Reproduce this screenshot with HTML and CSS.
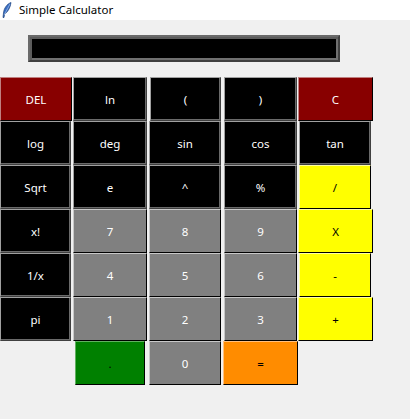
FILE: index.html
```html
<!DOCTYPE html>
<html>
<head>
<meta charset="utf-8">
<link rel="stylesheet" href="styles.css">
</head>
<body>
<div class="titlebar">
  <svg class="feather" width="10" height="16" viewBox="0 0 10 16">
    <path d="M9 0.5 C5 2 2 6 1.5 11 L1 15.5 L2 15.5 L2.6 12 C6 10 8.5 5 9 0.5 Z" fill="#3a6fc4" stroke="#1b3f7a" stroke-width="0.7"/>
    <path d="M8 2 L2.2 13" stroke="#b8d0f0" stroke-width="0.6"/>
  </svg>
  <span class="title">Simple Calculator</span>
</div>
<div class="main">
  <div class="entry"></div>
  <div class="keys">
    <button class="k red wide1">DEL</button>
    <button class="k blk">ln</button>
    <button class="k blk shift">(</button>
    <button class="k blk">)</button>
    <button class="k red">C</button>

    <button class="k blk">log</button>
    <button class="k blk">deg</button>
    <button class="k blk">sin</button>
    <button class="k blk">cos</button>
    <button class="k blk narrow5">tan</button>

    <button class="k blk">Sqrt</button>
    <button class="k blk">e</button>
    <button class="k blk">^</button>
    <button class="k blk">%</button>
    <button class="k yel narrow5">/</button>

    <button class="k blk">x!</button>
    <button class="k gry">7</button>
    <button class="k gry">8</button>
    <button class="k gry">9</button>
    <button class="k yel">X</button>

    <button class="k blk">1/x</button>
    <button class="k gry">4</button>
    <button class="k gry">5</button>
    <button class="k gry">6</button>
    <button class="k yel narrow5">-</button>

    <button class="k blk">pi</button>
    <button class="k gry">1</button>
    <button class="k gry">2</button>
    <button class="k gry">3</button>
    <button class="k yel">+</button>

    <span class="empty"></span>
    <button class="k grn dot">.</button>
    <button class="k gry">0</button>
    <button class="k org eq">=</button>
  </div>
</div>
</body>
</html>
```

FILE: styles.css
```css
html, body {
  margin: 0;
  padding: 0;
  background: #f0f0f0;
  font-family: "Noto Sans", "Open Sans", sans-serif;
}
.titlebar {
  height: 20px;
  background: #ffffff;
  display: flex;
  align-items: center;
  padding-left: 2px;
  box-sizing: border-box;
}
.feather {
  margin-right: 7px;
}
.title {
  font-size: 11.5px;
  color: #000;
  line-height: 20px;
}
.main {
  padding-top: 15px;
}
.entry {
  margin-left: 28px;
  width: 312px;
  height: 27px;
  box-sizing: border-box;
  background: #000;
  border: 2px solid;
  border-color: #6a6a6a #404040 #404040 #6a6a6a;
  box-shadow: inset 2px 2px 0 #5c5c5c, inset -2px -2px 0 #707070;
}
.keys {
  margin-top: 15px;
  display: grid;
  grid-template-columns: 73px 76px 74px 75px 75px;
  grid-auto-rows: 44px;
  width: 373px;
}
.k {
  margin: 0;
  padding: 0;
  font-family: "Noto Sans", "Open Sans", sans-serif;
  font-size: 11.5px;
  border: 1px solid;
  box-sizing: border-box;
  height: 100%;
  display: flex;
  align-items: center;
  justify-content: center;
  cursor: default;
}
.keys > :nth-child(5n+1) { width: 71px; }
.keys > :nth-child(5n+2) { width: 74px; }
.keys > :nth-child(5n+3) { width: 72px; }
.keys > :nth-child(5n+4) { width: 73px; margin-left: 1px; }
.keys > :nth-child(5n) { width: 75px; }
.keys > .wide1 { width: 72px; }
.keys > .shift { width: 71px; margin-left: 1px; }
.keys > .narrow5 { width: 72px; margin-left: 1px; }
.keys > .dot { width: 70px; margin-left: 2px; }
.keys > .eq { width: 75px; margin-left: 0; }

.blk {
  background: #000;
  color: #fff;
  border-color: #a0a0a0 #404040 #404040 #a0a0a0;
  box-shadow: inset -1px -1px 0 #6a6a6a;
}
.red {
  background: #880000;
  color: #fff;
  border-color: #c08080 #000 #000 #c08080;
}
.gry {
  background: #808080;
  color: #fff;
  border-color: #c8c8c8 #000 #000 #c8c8c8;
}
.yel {
  background: #ffff00;
  color: #000;
  border-color: #ffffa0 #000 #000 #ffffa0;
}
.grn {
  background: #008000;
  color: #000;
  border-color: #60b060 #000 #000 #60b060;
}
.org {
  background: #ff8c00;
  color: #000;
  border-color: #ffc080 #000 #000 #ffc080;
}
.empty {
  display: block;
}
```
